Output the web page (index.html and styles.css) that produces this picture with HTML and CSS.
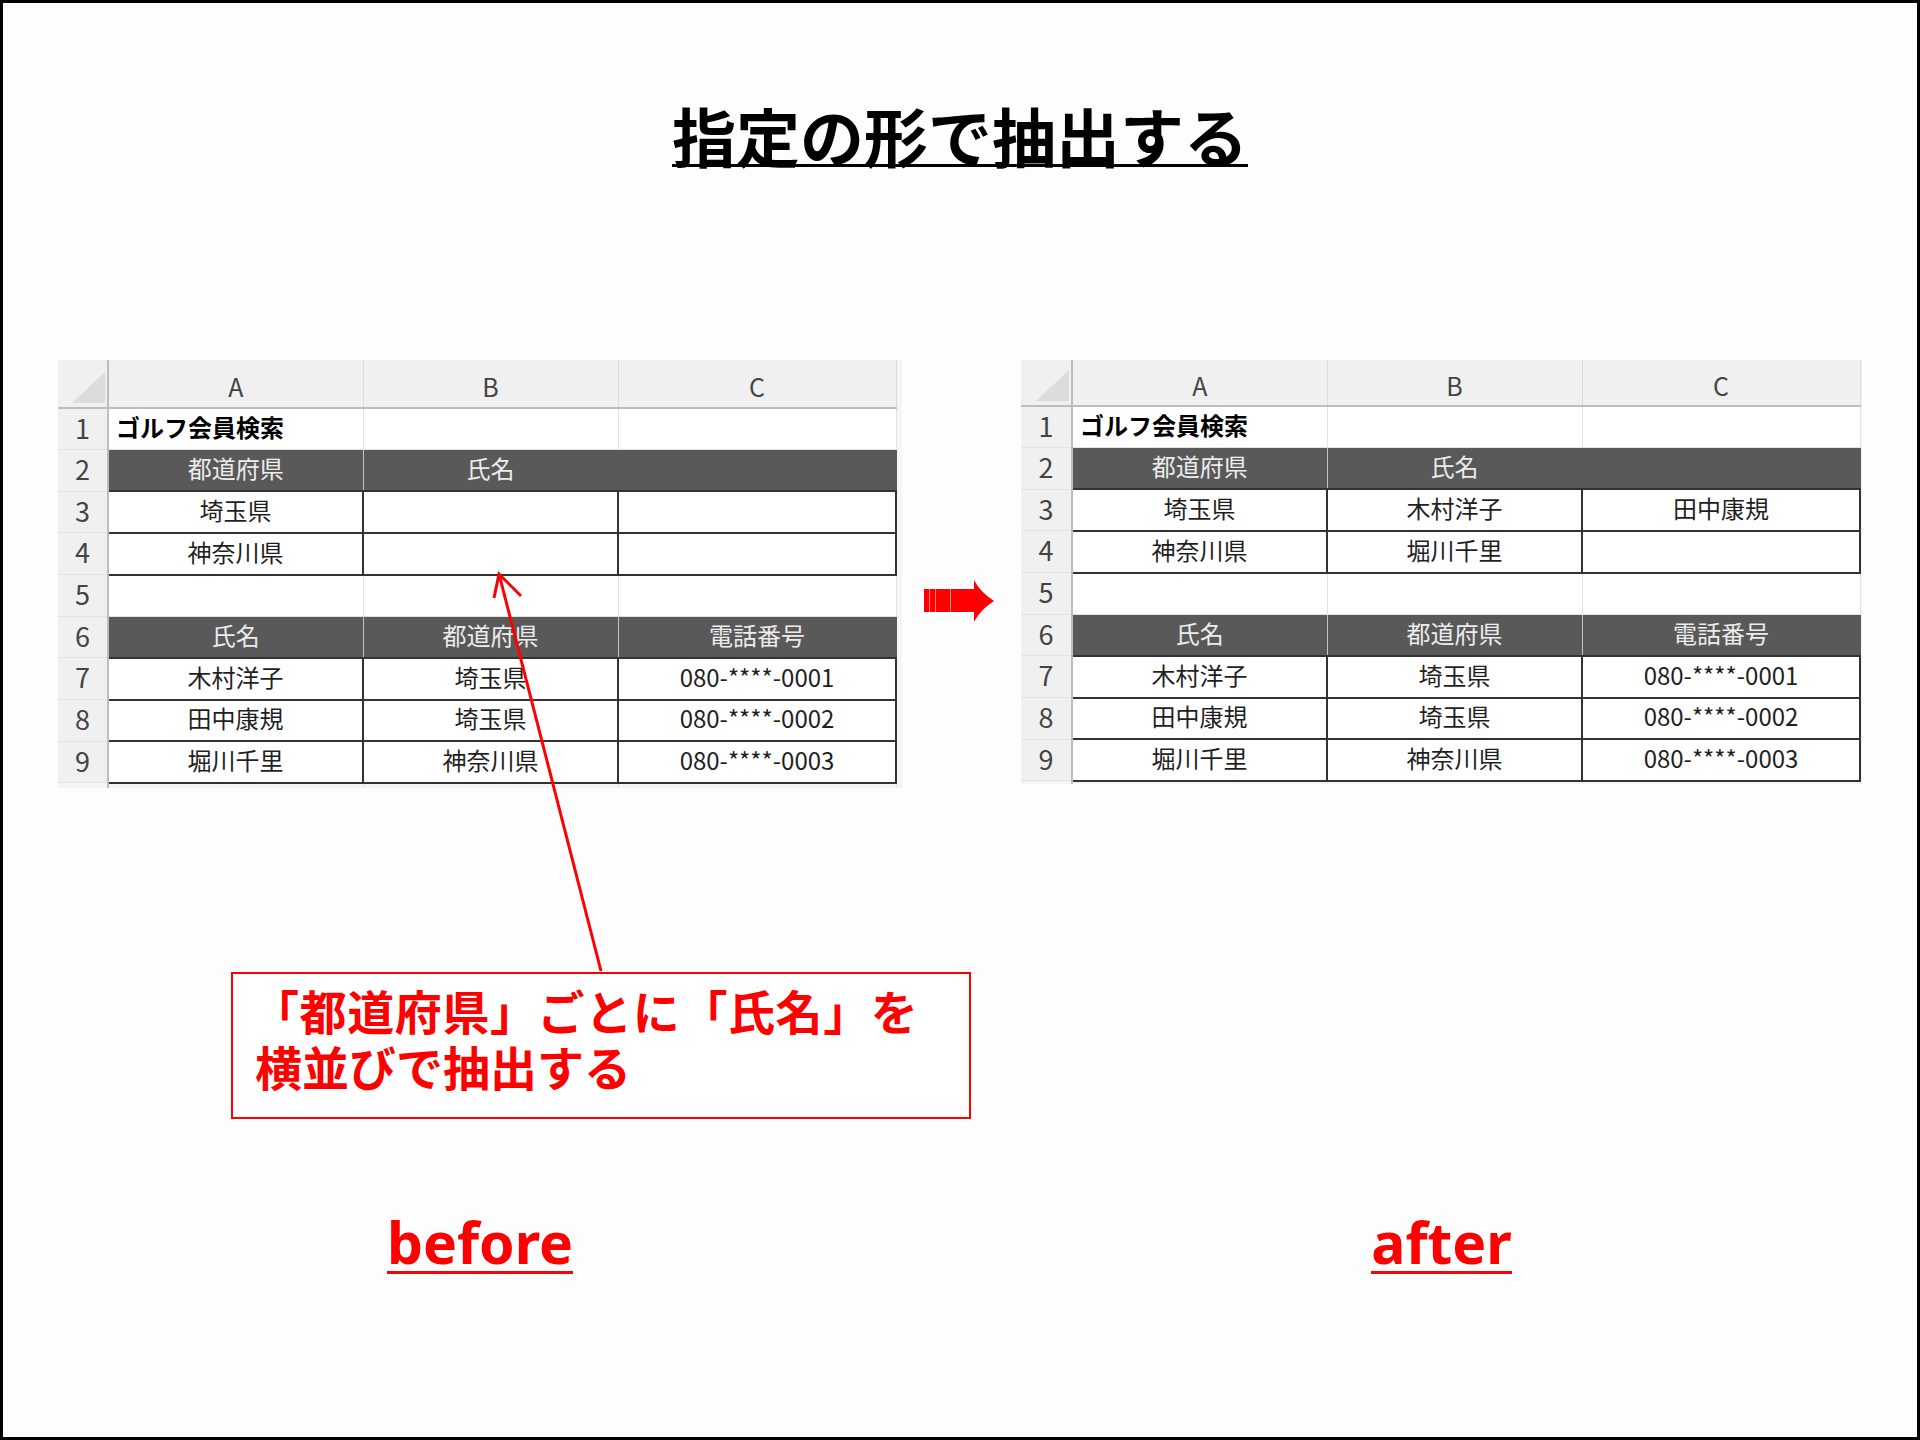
FILE: index.html
```html
<!DOCTYPE html>
<html lang="ja">
<head>
<meta charset="utf-8">
<title>指定の形で抽出する</title>
<link rel="stylesheet" href="styles.css">
</head>
<body>
<div class="frame">
  <div class="title"><span class="title-text">指定の形で抽出する</span></div>

  <div class="panels">
    <div class="col-left">
      <table class="sheet sheet-left">
        <colgroup><col class="c-rn"><col class="c-a"><col class="c-b"><col class="c-c"><col class="c-tail"></colgroup>
        <tr class="colhead">
          <th class="corner"><svg width="50" height="47" viewBox="0 0 50 47"><polygon points="47,12 47,43 14,43" fill="#dcdcdc"/></svg></th>
          <th>A</th><th>B</th><th>C</th><th class="tail"></th>
        </tr>
        <tr class="row"><th class="rn">1</th><td class="ttl">ゴルフ会員検索</td><td></td><td></td><td class="tail"></td></tr>
        <tr class="row"><th class="rn">2</th><td class="hd sep">都道府県</td><td class="hd">氏名</td><td class="hd"></td><td class="tail"></td></tr>
        <tr class="row"><th class="rn">3</th><td class="bx">埼玉県</td><td class="bx"></td><td class="bx"></td><td class="tail"></td></tr>
        <tr class="row"><th class="rn">4</th><td class="bx">神奈川県</td><td class="bx"></td><td class="bx"></td><td class="tail"></td></tr>
        <tr class="row"><th class="rn">5</th><td></td><td></td><td></td><td class="tail"></td></tr>
        <tr class="row"><th class="rn">6</th><td class="hd sep">氏名</td><td class="hd sep">都道府県</td><td class="hd">電話番号</td><td class="tail"></td></tr>
        <tr class="row"><th class="rn">7</th><td class="bx">木村洋子</td><td class="bx">埼玉県</td><td class="bx">080-****-0001</td><td class="tail"></td></tr>
        <tr class="row"><th class="rn">8</th><td class="bx">田中康規</td><td class="bx">埼玉県</td><td class="bx">080-****-0002</td><td class="tail"></td></tr>
        <tr class="row"><th class="rn">9</th><td class="bx">堀川千里</td><td class="bx">神奈川県</td><td class="bx">080-****-0003</td><td class="tail"></td></tr>
        <tr class="tailrow"><th class="rn"></th><td></td><td></td><td></td><td class="tail"></td></tr>
      </table>

      <div class="callout">
        <div class="callout-line callout-line1">「都道府県」ごとに「氏名」を</div>
        <div class="callout-line">横並びで抽出する</div>
      </div>
    </div>

    <div class="col-gap">
      <svg class="block-arrow" width="72" height="42" viewBox="0 0 72 42">
        <rect x="0" y="9" width="52" height="23" fill="#ff0000"/>
        <path d="M50 0 Q56 12 70 21 Q56 30 50 42 Z" fill="#ff0000"/>
        <line x1="5.5" y1="9" x2="5.5" y2="32" stroke="#ff8a8a" stroke-width="1"/>
        <line x1="11.5" y1="9" x2="11.5" y2="32" stroke="#ff8a8a" stroke-width="1"/>
        <line x1="26.5" y1="9" x2="26.5" y2="32" stroke="#ff8a8a" stroke-width="1"/>
      </svg>
    </div>

    <div class="col-right">
      <table class="sheet sheet-right">
        <colgroup><col class="c-rn2"><col class="c-a"><col class="c-b"><col class="c-c"><col class="c-tail2"></colgroup>
        <tr class="colhead colhead2">
          <th class="corner"><svg width="51" height="45" viewBox="0 0 51 45"><polygon points="48,10 48,41 15,41" fill="#dcdcdc"/></svg></th>
          <th>A</th><th>B</th><th>C</th><th class="tail"></th>
        </tr>
        <tr class="row"><th class="rn">1</th><td class="ttl">ゴルフ会員検索</td><td></td><td></td><td class="tail"></td></tr>
        <tr class="row"><th class="rn">2</th><td class="hd sep">都道府県</td><td class="hd">氏名</td><td class="hd"></td><td class="tail"></td></tr>
        <tr class="row"><th class="rn">3</th><td class="bx">埼玉県</td><td class="bx">木村洋子</td><td class="bx">田中康規</td><td class="tail"></td></tr>
        <tr class="row"><th class="rn">4</th><td class="bx">神奈川県</td><td class="bx">堀川千里</td><td class="bx"></td><td class="tail"></td></tr>
        <tr class="row"><th class="rn">5</th><td></td><td></td><td></td><td class="tail"></td></tr>
        <tr class="row"><th class="rn">6</th><td class="hd sep">氏名</td><td class="hd sep">都道府県</td><td class="hd">電話番号</td><td class="tail"></td></tr>
        <tr class="row"><th class="rn">7</th><td class="bx">木村洋子</td><td class="bx">埼玉県</td><td class="bx">080-****-0001</td><td class="tail"></td></tr>
        <tr class="row"><th class="rn">8</th><td class="bx">田中康規</td><td class="bx">埼玉県</td><td class="bx">080-****-0002</td><td class="tail"></td></tr>
        <tr class="row"><th class="rn">9</th><td class="bx">堀川千里</td><td class="bx">神奈川県</td><td class="bx">080-****-0003</td><td class="tail"></td></tr>
        <tr class="tailrow tailrow2"><th class="rn"></th><td></td><td></td><td></td><td class="tail"></td></tr>
      </table>
    </div>
  </div>

  <div class="labels">
    <div class="label-cell label-left"><span class="label">before</span></div>
    <div class="label-gap"></div>
    <div class="label-cell label-right"><span class="label">after</span></div>
  </div>

  <svg class="pointer" width="1920" height="1440" viewBox="0 0 1920 1440">
    <path d="M601 971 L499 574" stroke="#ff0000" stroke-width="3" fill="none"/>
    <path d="M494 598 L499 574 L521 596" stroke="#ff0000" stroke-width="3" fill="none" stroke-linejoin="miter"/>
  </svg>
</div>
</body>
</html>
```

FILE: styles.css
```css
* {
  box-sizing: border-box;
}

body {
  margin: 0;
  background: #ffffff;
  font-family: "Noto Sans CJK JP", "Noto Sans", sans-serif;
}

.frame {
  position: relative;
  width: 1920px;
  height: 1440px;
  border: 3px solid #000000;
  background: #fdfdfd;
  overflow: hidden;
}

/* Title */
.title {
  display: flex;
  justify-content: center;
  padding-top: 101px;
}

.title-text {
  font-size: 64px;
  font-weight: 700;
  line-height: 60px;
  color: #000000;
  border-bottom: 3px solid #000000;
}

/* Panels */
.panels {
  display: flex;
  align-items: flex-start;
  margin-top: 193px;
  padding-left: 55px;
}

.col-left {
  width: 844px;
  flex: none;
}

.col-gap {
  width: 119px;
  flex: none;
  padding-left: 22px;
  padding-top: 220px;
}

.block-arrow {
  display: block;
}

.col-right {
  width: 841px;
  flex: none;
}

/* Spreadsheet */
.sheet {
  border-collapse: collapse;
  table-layout: fixed;
  background: #f0f0f0;
  color: #1f1f1f;
  font-size: 24px;
}

.sheet-left {
  width: 844px;
}

.sheet-right {
  width: 841px;
}

.c-rn { width: 50px; }
.c-rn2 { width: 51px; }
.c-a { width: 255px; }
.c-b { width: 255px; }
.c-c { width: 278px; }
.c-tail { width: 6px; }
.c-tail2 { width: 2px; }

.sheet th,
.sheet td {
  padding: 0 0 4px 0;
  font-weight: 400;
  text-align: center;
  vertical-align: middle;
  line-height: 1;
  white-space: nowrap;
  overflow: hidden;
}

.colhead {
  height: 47px;
}

.colhead2 {
  height: 45px;
}

.colhead th {
  background: #f0f0f0;
  color: #444444;
  font-size: 25px;
  padding: 5px 0 0 0;
  border-right: 1px solid #dadada;
  border-bottom: 2px solid #bdbdbd;
}

.colhead th.corner {
  padding: 0;
  line-height: 0;
  border-right: 2px solid #bdbdbd;
}

.corner svg {
  display: block;
}

.row {
  height: 41.67px;
}

.rn {
  background: #f0f0f0;
  color: #444444;
  font-size: 27px;
  border-right: 2px solid #bdbdbd;
  border-bottom: 1px solid #e2e2e2;
}

.sheet td {
  background: #ffffff;
  border: 1px solid #e2e2e2;
}

.sheet td.ttl {
  text-align: left;
  padding-left: 7px;
  font-weight: 700;
  color: #000000;
}

.sheet td.hd {
  background: #595959;
  color: #ececec;
  border: 1px solid #595959;
}

.sheet td.hd.sep {
  border-right: 1px solid #c4c4c4;
}

.sheet td.bx {
  border: 2px solid #333333;
}

.sheet .tail {
  background: #f5f5f5;
  border: 0;
}

.tailrow {
  height: 5px;
}

.tailrow2 {
  height: 3px;
}

.tailrow td,
.tailrow th {
  padding: 0;
  background: #f5f5f5;
  border-top: 0;
  border-bottom: 0;
}

/* Callout */
.callout {
  margin-top: 184px;
  margin-left: 173px;
  width: 740px;
  height: 147px;
  border: 2px solid #ff0000;
  background: #ffffff;
  padding: 8px 0 0 22px;
  color: #ff0000;
  font-size: 47px;
  font-weight: 700;
  line-height: 56px;
  white-space: nowrap;
}

.callout-line1 {
  letter-spacing: 0.6px;
  margin-left: -3px;
}

/* Labels */
.labels {
  display: flex;
  margin-top: 95px;
  padding-left: 55px;
}

.label-cell {
  display: flex;
  justify-content: center;
  flex: none;
}

.label-left {
  width: 844px;
}

.label-gap {
  width: 119px;
  flex: none;
}

.label-right {
  width: 841px;
}

.label {
  font-family: "Noto Sans", sans-serif;
  font-weight: 700;
  font-size: 57px;
  line-height: 57px;
  color: #ff0000;
  border-bottom: 3px solid #ff0000;
}

/* Pointer line overlay */
.pointer {
  position: absolute;
  top: -3px;
  left: -3px;
  pointer-events: none;
}
```
